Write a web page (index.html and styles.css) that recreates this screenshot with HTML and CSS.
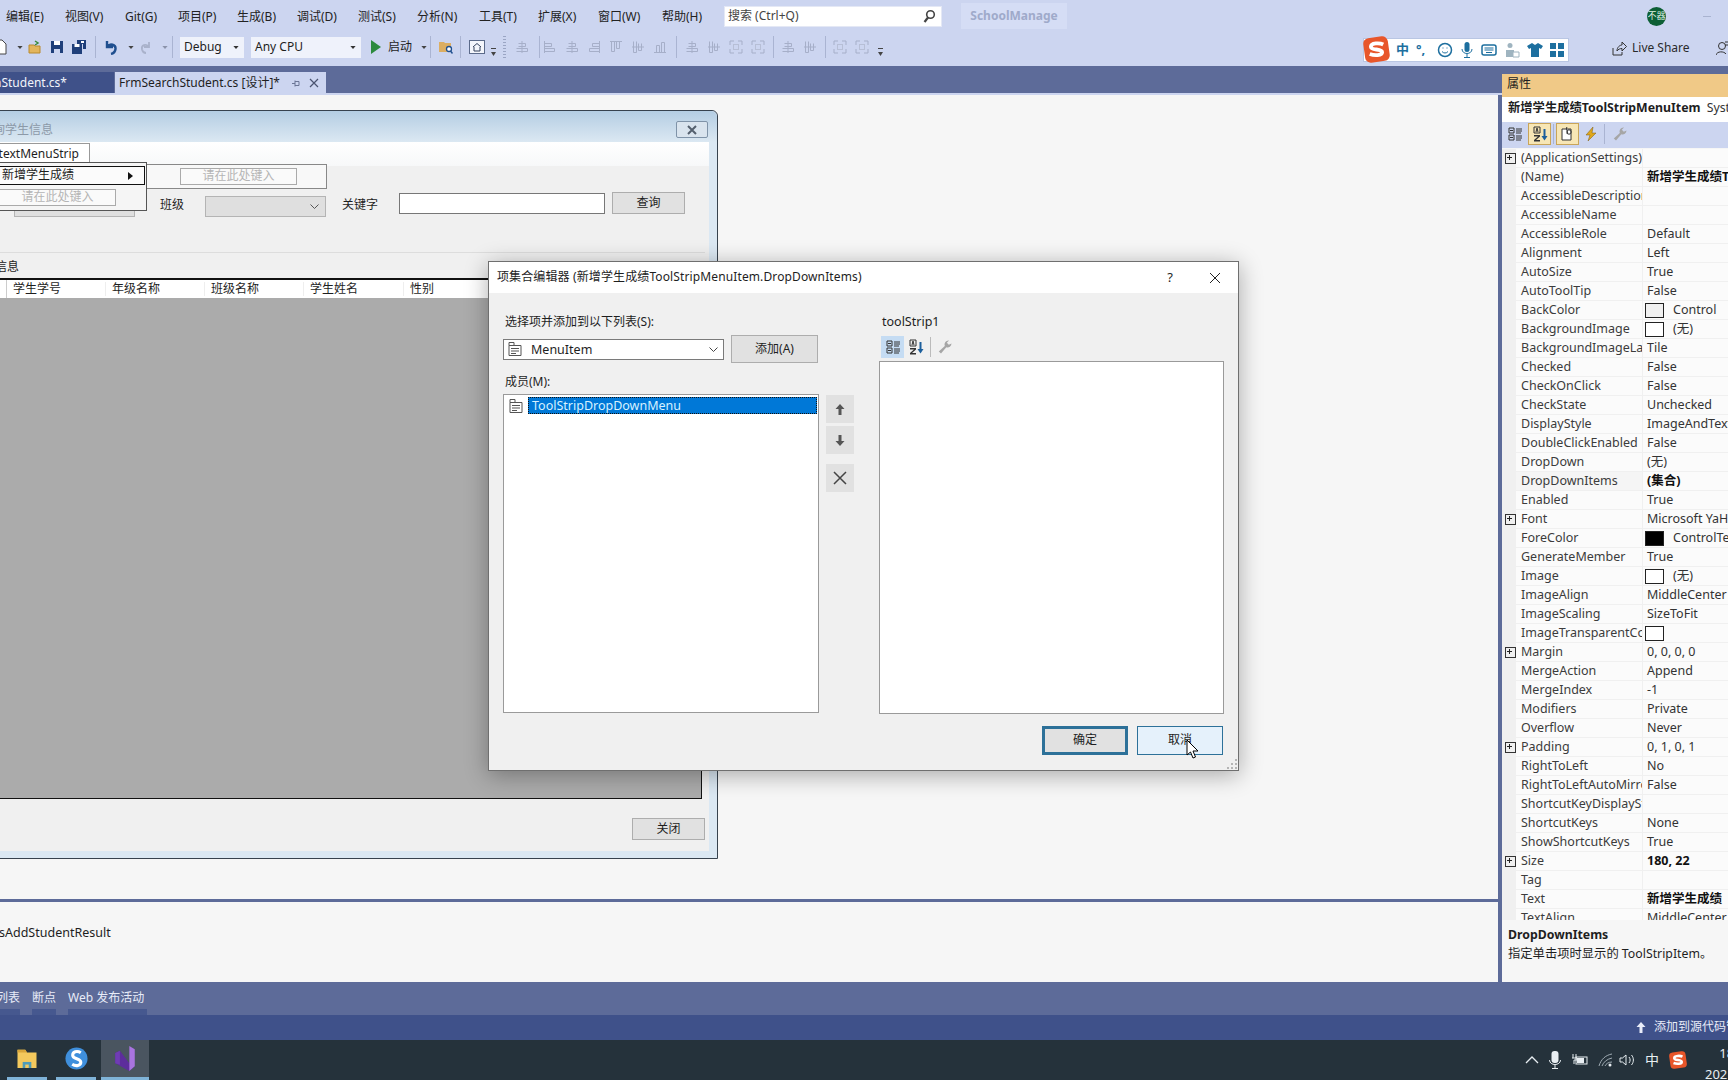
FILE: index.html
```html
<!DOCTYPE html>
<html lang="zh">
<head>
<meta charset="utf-8">
<title>SchoolManage - Visual Studio</title>
<link rel="stylesheet" href="styles.css">
</head>
<body>
<svg class="defs" width="0" height="0" aria-hidden="true">
  <symbol id="i-caret" viewBox="0 0 7 4"><path d="M0 0h7L3.500 4z"/></symbol>
  <symbol id="i-align" viewBox="0 0 14 14"><path d="M1.500 1v12M1.500 3.500h7v3h-7M1.500 8.500h10v3h-10" fill="none" stroke="#a6afc9"/></symbol>
  <symbol id="i-center" viewBox="0 0 14 14"><path d="M7 1v12M3.500 3.500h7v3h-7M1.500 8.500h11v3h-11" fill="none" stroke="#a6afc9"/></symbol>
  <symbol id="i-bracket" viewBox="0 0 14 14"><path d="M1 1h4M1 1v4M13 1H9M13 1v4M1 13h4M1 13V9M13 13H9M13 13V9" fill="none" stroke="#a6afc9"/><rect x="4.500" y="4.500" width="5" height="5" fill="none" stroke="#b7bfd6"/></symbol>
  <symbol id="i-cat" viewBox="0 0 16 16"><path d="M2 2h5v5H2zM2 9h5v5H2z" fill="none" stroke="#333"/><path d="M3 4.500h3M3 11.500h3M9 3h6M9 5h6M9 7h5M9 10h6M9 12h6M9 14h5" stroke="#333" fill="none"/></symbol>
  <symbol id="i-az" viewBox="0 0 16 16"><path d="M2 1h6v6H2z" fill="none" stroke="#333"/><path d="M4 6l1-4 1 4" stroke="#333" fill="none"/><path d="M2 9h6v1.500L4 14h4v1.500H2V14l4-3.500H2z" fill="#333"/><path d="M12.500 3v9" stroke="#1c5f9c" stroke-width="2"/><path d="M9.500 10h6l-3 4.500z" fill="#1c5f9c"/></symbol>
  <symbol id="i-wrench" viewBox="0 0 16 16"><path d="M14.500 4.500a4 4 0 0 1-5.200 3.800L4 14.500 1.800 12.500l6-5.500A4 4 0 0 1 12 1.500L9.800 3.800l2 2z" fill="#a6a6a6"/></symbol>
  <symbol id="i-list" viewBox="0 0 16 16"><path d="M2 1.500h5v3H2zM2 4.500v10h12v-10H7M4 7.500h8M4 10h8M4 12.500h5" fill="none" stroke="#555"/></symbol>
  <symbol id="i-sogou" viewBox="0 0 24 24"><rect x="1" y="1" width="22" height="22" rx="5" fill="#e8562a" transform="rotate(-8 12 12)"/><path d="M18 7.500c-3-1.500-11-1.500-11 2 0 3.500 10 1.500 10 5 0 3-7 3-11 1.500" fill="none" stroke="#fff" stroke-width="3.400"/></symbol>
</svg>

<div class="app">
  <header class="menubar">
    <nav class="menus">
      <span class="m1">编辑(E)</span><span class="m2">视图(V)</span><span class="m3">Git(G)</span><span class="m4">项目(P)</span><span class="m5">生成(B)</span><span class="m6">调试(D)</span><span class="m7">测试(S)</span><span class="m8">分析(N)</span><span class="m9">工具(T)</span><span class="m10">扩展(X)</span><span class="m11">窗口(W)</span><span class="m12">帮助(H)</span>
    </nav>
    <div class="search"><span>搜索 (Ctrl+Q)</span>
      <svg width="14" height="14" viewBox="0 0 14 14"><circle cx="8.500" cy="5.500" r="3.800" fill="none" stroke="#444" stroke-width="1.600"/><path d="M6 8.500L2.500 13" stroke="#444" stroke-width="2.200"/></svg>
    </div>
    <div class="solution">SchoolManage</div>
    <div class="avatar">不器</div>
    <div class="minimize"></div>
  </header>

  <div class="toolbar">
    <svg class="ti t-new" width="7" height="16" viewBox="0 0 7 16"><path d="M-8 1H2l4 4v10H-8z" fill="#fff" stroke="#444"/></svg>
    <svg class="car t-c1" width="6" height="3"><use href="#i-caret" fill="#444"/></svg>
    <svg class="ti t-open" width="14" height="14" viewBox="0 0 14 14"><path d="M1 5h5l1 1h5v7H1z" fill="#e3b55c" stroke="#b98a2d"/><path d="M7 1l3 2-3 2" fill="none" stroke="#3a8a3a" stroke-width="1.500"/></svg>
    <svg class="ti t-save" width="14" height="14" viewBox="0 0 14 14"><path d="M1 1h12v12H1z" fill="#1f3f7a"/><path d="M4 1h6v4H4z" fill="#fff"/><path d="M4 9h6v4H4z" fill="#ccd5f0"/></svg>
    <svg class="ti t-saveall" width="14" height="14" viewBox="0 0 14 14"><path d="M0 4h10v10H0z" fill="#1f3f7a"/><path d="M5 0h9v9h-3V4H5z" fill="#1f3f7a"/><path d="M2.500 4h5v3h-5z" fill="#fff"/><path d="M9 1h3v2H9z" fill="#fff"/></svg>
    <i class="sep s1"></i>
    <svg class="ti t-undo" width="14" height="15" viewBox="0 0 14 15"><path d="M3 1v6h6M3.500 6.500C6 3 12 4.500 11.500 9c-.3 2.500-2.500 4.500-4.500 5" fill="none" stroke="#1f4f8f" stroke-width="2.400"/></svg>
    <svg class="car t-c2" width="6" height="3"><use href="#i-caret" fill="#444"/></svg>
    <svg class="ti t-redo" width="14" height="14" viewBox="0 0 14 14"><path d="M10 2v5H5M9.500 6.500C7 3.500 2 5 3 9.500 3.500 11.500 5.500 13 7 13" fill="none" stroke="#a9b2cb" stroke-width="1.800"/></svg>
    <svg class="car t-c3" width="6" height="3"><use href="#i-caret" fill="#8b93aa"/></svg>
    <i class="sep s2"></i>
    <div class="combo c-debug"><span>Debug</span><svg width="6" height="3"><use href="#i-caret" fill="#333"/></svg></div>
    <div class="combo c-cpu"><span>Any CPU</span><svg width="6" height="3"><use href="#i-caret" fill="#333"/></svg></div>
    <svg class="ti t-play" width="10" height="14" viewBox="0 0 10 14"><path d="M0 0l10 7-10 7z" fill="#2c8a3e"/></svg>
    <span class="start">启动</span>
    <svg class="car t-c4" width="6" height="3"><use href="#i-caret" fill="#444"/></svg>
    <i class="sep s3"></i>
    <svg class="ti t-find" width="14" height="14" viewBox="0 0 14 14"><path d="M0 2h5l1 1h6v9H0z" fill="#dcae63"/><circle cx="10" cy="9" r="2.500" fill="#fff" stroke="#1f4f8f" stroke-width="1.300"/><path d="M11.500 11l2 2.500" stroke="#1f4f8f" stroke-width="1.500"/></svg>
    <i class="sep s4"></i>
    <svg class="ti t-home" width="16" height="14" viewBox="0 0 16 14"><rect x=".5" y=".5" width="15" height="13" fill="#f4f6fc" stroke="#5b6a8a"/><path d="M4 7l4-3.500L12 7M5 7v4h6V7" fill="none" stroke="#33415c"/></svg>
    <svg class="car t-c5" width="5" height="8" viewBox="0 0 5 8"><path d="M0 0h5v1H0zM0 4h5L2.500 8z" fill="#444"/></svg>
    <i class="grip"></i>
    <svg class="ti t-g0" width="14" height="14"><use href="#i-center"/></svg>
    <i class="sep s5"></i>
    <div class="greys g1">
      <svg width="14" height="14"><use href="#i-align"/></svg><svg width="14" height="14"><use href="#i-center"/></svg><svg width="14" height="14"><use href="#i-align" transform="matrix(-1 0 0 1 14 0)"/></svg><svg width="14" height="14"><use href="#i-align" transform="rotate(90 7 7)"/></svg><svg width="14" height="14"><use href="#i-center" transform="rotate(90 7 7)"/></svg><svg width="14" height="14"><use href="#i-align" transform="rotate(-90 7 7)"/></svg>
    </div>
    <i class="sep s6"></i>
    <div class="greys g2">
      <svg width="14" height="14"><use href="#i-center"/></svg><svg width="14" height="14"><use href="#i-center" transform="rotate(90 7 7)"/></svg><svg width="14" height="14"><use href="#i-bracket"/></svg><svg width="14" height="14"><use href="#i-bracket"/></svg>
    </div>
    <i class="sep s7"></i>
    <div class="greys g3"><svg width="14" height="14"><use href="#i-center"/></svg><svg width="14" height="14"><use href="#i-center" transform="rotate(90 7 7)"/></svg></div>
    <i class="sep s8"></i>
    <div class="greys g4"><svg width="14" height="14"><use href="#i-bracket"/></svg><svg width="14" height="14"><use href="#i-bracket"/></svg></div>
    <svg class="car t-c6" width="5" height="8" viewBox="0 0 5 8"><path d="M0 0h5v1H0zM0 4h5L2.500 8z" fill="#444"/></svg>

    <div class="ime">
      <svg class="ime-s" width="27" height="27"><use href="#i-sogou"/></svg>
      <span class="ime-t">中</span><span class="ime-t dot">°,</span>
      <svg width="16" height="16" viewBox="0 0 16 16"><circle cx="8" cy="8" r="6.500" fill="none" stroke="#1d6f9f" stroke-width="1.500"/><path d="M5 9.500c1.500 2 4.500 2 6 0M5.500 6h1M9.500 6h1" stroke="#1d6f9f" fill="none"/></svg>
      <svg width="14" height="16" viewBox="0 0 14 16"><rect x="4.500" y="0" width="5" height="10" rx="2.500" fill="#1d6f9f"/><path d="M2 7c0 6 10 6 10 0M7 12v3M4 15.500h6" stroke="#1d6f9f" fill="none"/></svg>
      <svg width="16" height="14" viewBox="0 0 16 14"><rect x="1" y="2" width="14" height="10" rx="2" fill="none" stroke="#1d6f9f" stroke-width="1.500"/><path d="M3.500 5h9M3.500 7h9M5 9.500h6" stroke="#1d6f9f"/></svg>
      <svg width="16" height="16" viewBox="0 0 16 16"><circle cx="6" cy="3.500" r="2.500" fill="#9fb4c0"/><path d="M2 8h8v7H2z" fill="#9fb4c0"/><path d="M9 10h6v5H9z" fill="#fff" stroke="#9fb4c0"/></svg>
      <svg width="16" height="14" viewBox="0 0 16 14"><path d="M5 0L0 3l2 3 2-1v9h8V5l2 1 2-3-5-3-3 2z" fill="#1d6f9f"/></svg>
      <svg width="14" height="14" viewBox="0 0 14 14"><path d="M0 0h6v6H0zM8 0h6v6H8zM0 8h6v6H0zM8 8h6v6H8z" fill="#1d6f9f"/></svg>
    </div>
    <div class="liveshare">
      <svg width="15" height="15" viewBox="0 0 15 15"><path d="M1 7v7h9v-3M5 10c0-4 3-6 5-6V1l4.500 4.500L10 10V7.500c-2 0-4 .8-5 2.500z" fill="none" stroke="#333"/></svg>
      <span>Live Share</span>
    </div>
    <svg class="person" width="14" height="16" viewBox="0 0 14 16"><circle cx="6" cy="5" r="3.500" fill="none" stroke="#333"/><path d="M0 14c1-4 8-4 10-1M9 1h5M9 4h5" fill="none" stroke="#333"/></svg>
  </div>

  <div class="tabstrip">
    <div class="tab tab-off"><span>nStudent.cs*</span></div>
    <div class="tab tab-on">
      <span>FrmSearchStudent.cs [设计]*</span>
      <svg width="9" height="9" viewBox="0 0 9 9"><path d="M1 4.500h3M4 1.500v6M4 2.500h4M4 6.500h4M8 2.500v4" stroke="#6b7696" fill="none"/></svg>
      <svg width="10" height="10" viewBox="0 0 10 10"><path d="M1 1l8 8M9 1l-8 8" stroke="#4a5470" stroke-width="1.200"/></svg>
    </div>
  </div>

  <div class="workspace">
    <main class="center">
      <section class="designer">
        <div class="form">
          <div class="form-title"><span>查询学生信息</span><b class="form-close"><svg width="14" height="10" viewBox="0 0 14 10"><path d="M3 1l8 8M11 1L3 9" stroke="#54606e" stroke-width="2"/></svg></b></div>
          <div class="form-menu"></div>
          <div class="form-body">
            <div class="filter">
              <div class="f-combo off f1"></div>
              <span class="f-lab l1">班级</span>
              <div class="f-combo off f2"><svg width="9" height="5" viewBox="0 0 9 5"><path d="M.5.500l4 4 4-4" fill="none" stroke="#555"/></svg></div>
              <span class="f-lab l2">关键字</span>
              <div class="f-input"></div>
              <div class="f-btn">查询</div>
            </div>
            <div class="f-caption">信息</div>
            <div class="grid">
              <div class="grid-head"><span class="h0"></span><span>学生学号</span><span>年级名称</span><span>班级名称</span><span>学生姓名</span><span>性别</span></div>
            </div>
            <div class="form-foot"><div class="f-btn">关闭</div></div>
          </div>
          <div class="cms-tab">textMenuStrip</div>
          <div class="cms-drop">
            <div class="cms-item"><span>新增学生成绩</span><svg width="5" height="8" viewBox="0 0 5 8"><path d="M0 0l5 4-5 4z" fill="#111"/></svg></div>
            <div class="cms-ph">请在此处键入</div>
          </div>
          <div class="cms-sub"><div class="cms-ph">请在此处键入</div></div>
        </div>
      </section>
      <div class="splitter"></div>
      <section class="output">sAddStudentResult</section>
    </main>

    <aside class="props">
      <div class="p-title">属性</div>
      <div class="p-subject"><b>新增学生成绩ToolStripMenuItem</b> <span>System.Windows.Forms.ToolStripMenuItem</span></div>
      <div class="p-tools">
        <svg width="16" height="16"><use href="#i-cat"/></svg>
        <b class="p-on"><svg width="16" height="16"><use href="#i-az"/></svg></b>
        <i class="p-sep first"></i>
        <b class="p-on"><svg width="16" height="16" viewBox="0 0 16 16"><path d="M2 3h9v11H2z" fill="#fff" stroke="#333"/><path d="M7 1c-2 3 2 4 0 7" stroke="#333" fill="none"/><circle cx="9" cy="6" r="2.200" fill="none" stroke="#333"/></svg></b>
        <svg width="14" height="16" viewBox="0 0 14 16"><path d="M9 1L2 9h4l-2 6 8-8H8z" fill="#e0a81c" stroke="#7a5b10" stroke-width=".5"/></svg>
        <i class="p-sep second"></i>
        <svg width="16" height="16"><use href="#i-wrench"/></svg>
      </div>
      <div class="p-grid">
        <div class="row"><i class="plus"></i><span>(ApplicationSettings)</span><em></em></div>
        <div class="row"><i></i><span>(Name)</span><em class="bold">新增学生成绩ToolStripMenuItem</em></div>
        <div class="row"><i></i><span>AccessibleDescription</span><em></em></div>
        <div class="row"><i></i><span>AccessibleName</span><em></em></div>
        <div class="row"><i></i><span>AccessibleRole</span><em>Default</em></div>
        <div class="row"><i></i><span>Alignment</span><em>Left</em></div>
        <div class="row"><i></i><span>AutoSize</span><em>True</em></div>
        <div class="row"><i></i><span>AutoToolTip</span><em>False</em></div>
        <div class="row"><i></i><span>BackColor</span><em><u class="sw grey"></u>Control</em></div>
        <div class="row"><i></i><span>BackgroundImage</span><em><u class="sw"></u>(无)</em></div>
        <div class="row"><i></i><span>BackgroundImageLayout</span><em>Tile</em></div>
        <div class="row"><i></i><span>Checked</span><em>False</em></div>
        <div class="row"><i></i><span>CheckOnClick</span><em>False</em></div>
        <div class="row"><i></i><span>CheckState</span><em>Unchecked</em></div>
        <div class="row"><i></i><span>DisplayStyle</span><em>ImageAndText</em></div>
        <div class="row"><i></i><span>DoubleClickEnabled</span><em>False</em></div>
        <div class="row"><i></i><span>DropDown</span><em>(无)</em></div>
        <div class="row sel"><i></i><span>DropDownItems</span><em class="bold">(集合)</em></div>
        <div class="row"><i></i><span>Enabled</span><em>True</em></div>
        <div class="row"><i class="plus"></i><span>Font</span><em>Microsoft YaHei UI, 9pt</em></div>
        <div class="row"><i></i><span>ForeColor</span><em><u class="sw black"></u>ControlText</em></div>
        <div class="row"><i></i><span>GenerateMember</span><em>True</em></div>
        <div class="row"><i></i><span>Image</span><em><u class="sw"></u>(无)</em></div>
        <div class="row"><i></i><span>ImageAlign</span><em>MiddleCenter</em></div>
        <div class="row"><i></i><span>ImageScaling</span><em>SizeToFit</em></div>
        <div class="row"><i></i><span>ImageTransparentColor</span><em><u class="sw"></u></em></div>
        <div class="row"><i class="plus"></i><span>Margin</span><em>0, 0, 0, 0</em></div>
        <div class="row"><i></i><span>MergeAction</span><em>Append</em></div>
        <div class="row"><i></i><span>MergeIndex</span><em>-1</em></div>
        <div class="row"><i></i><span>Modifiers</span><em>Private</em></div>
        <div class="row"><i></i><span>Overflow</span><em>Never</em></div>
        <div class="row"><i class="plus"></i><span>Padding</span><em>0, 1, 0, 1</em></div>
        <div class="row"><i></i><span>RightToLeft</span><em>No</em></div>
        <div class="row"><i></i><span>RightToLeftAutoMirrorImage</span><em>False</em></div>
        <div class="row"><i></i><span>ShortcutKeyDisplayString</span><em></em></div>
        <div class="row"><i></i><span>ShortcutKeys</span><em>None</em></div>
        <div class="row"><i></i><span>ShowShortcutKeys</span><em>True</em></div>
        <div class="row"><i class="plus"></i><span>Size</span><em class="bold">180, 22</em></div>
        <div class="row"><i></i><span>Tag</span><em></em></div>
        <div class="row"><i></i><span>Text</span><em class="bold">新增学生成绩</em></div>
        <div class="row"><i></i><span>TextAlign</span><em>MiddleCenter</em></div>
      </div>
      <div class="p-desc"><b>DropDownItems</b><span>指定单击项时显示的 ToolStripItem。</span></div>
    </aside>
  </div>

  <div class="navstrip"><span class="n1">错误列表</span><span class="n2">断点</span><span class="n3">Web 发布活动</span></div>
  <div class="status">
    <svg width="10" height="11" viewBox="0 0 10 11"><path d="M5 0l4.500 5H6.500v6h-3V5H.5z" fill="#e8ecf8"/></svg>
    <span>添加到源代码管理</span>
  </div>
  <footer class="taskbar">
    <div class="tb-btn b1"><svg width="22" height="19" viewBox="0 0 24 22"><path d="M1 1h9l2 3h11v18H1z" fill="#f4c95d"/><path d="M1 1h9l2 3H1z" fill="#d9a63a"/><path d="M7 15h10v7H7z" fill="#4f9cb8"/><path d="M10 18h4v4h-4z" fill="#f4c95d"/></svg></div>
    <div class="tb-btn b2"><svg width="23" height="23" viewBox="0 0 24 24"><circle cx="12" cy="12" r="11.500" fill="#3f8fdc"/><path d="M16.500 6C12.500 3.500 8 5 8 8.500c0 4.500 8.500 3 8.500 7.500 0 3.500-5 4.500-9 2" fill="none" stroke="#fff" stroke-width="3.200"/></svg></div>
    <div class="tb-btn b3"><svg width="24" height="25" viewBox="0 0 25 32"><path d="M0 9l6-3 12 16 7 4-7 6L0 22z" fill="#5d2d9c"/><path d="M18 0l7 4v22l-7 6z" fill="#a974e0"/><path d="M0 9l6-3v18l-6-2z" fill="#6f3cb4"/></svg></div>
    <div class="tray">
      <svg width="14" height="8" viewBox="0 0 14 8"><path d="M1 7l6-6 6 6" fill="none" stroke="#e8eef2" stroke-width="1.300"/></svg>
      <svg width="12" height="18" viewBox="0 0 12 18"><rect x="2.500" y="0" width="7" height="12" rx="3" fill="#e8eef2"/><path d="M.5 9c0 6 11 6 11 0M6 14v3M3 17.500h6" stroke="#e8eef2" fill="none"/></svg>
      <svg width="17" height="12" viewBox="0 0 17 12"><rect x="5" y="3" width="11" height="7" fill="none" stroke="#e8eef2"/><rect x="6" y="4" width="7" height="5" fill="#e8eef2"/><path d="M2 0v4M5 0v4M1 4h5v2H3v4" stroke="#e8eef2" fill="none"/></svg>
      <svg width="15" height="14" viewBox="0 0 15 14"><path d="M1 13C3 6 8 2 14 1M4 13c1.500-4 5-7 10-8M7 13c1-2 3-4 7-4" fill="none" stroke="#9fabb3"/><circle cx="12" cy="12" r="1.500" fill="#e8eef2"/></svg>
      <svg class="spk" width="16" height="14" viewBox="0 0 16 14"><path d="M1 5h2.500L7 2v10L3.500 9H1zM10 4c1.500 2 1.500 4 0 6M12.500 2c2.500 3 2.500 7 0 10" fill="none" stroke="#e8eef2"/></svg>
      <span class="tray-zh">中</span>
      <svg width="18" height="18"><use href="#i-sogou"/></svg>
    </div>
    <div class="clock"><span>18:12</span><span>2021/12/9</span></div>
  </footer>

  <div class="dialog">
    <div class="d-title"><span>项集合编辑器 (新增学生成绩ToolStripMenuItem.DropDownItems)</span><b>?</b>
      <svg width="12" height="12" viewBox="0 0 12 12"><path d="M1 1l10 10M11 1L1 11" stroke="#222"/></svg>
    </div>
    <div class="d-body">
      <div class="d-left">
        <label class="d-lab">选择项并添加到以下列表(S):</label>
        <div class="d-add">
          <div class="d-combo"><svg width="16" height="16"><use href="#i-list"/></svg><span>MenuItem</span><svg class="d-chev" width="9" height="5" viewBox="0 0 9 5"><path d="M.5.500l4 4 4-4" fill="none" stroke="#444"/></svg></div>
          <div class="d-btn addb">添加(A)</div>
        </div>
        <label class="d-lab mem">成员(M):</label>
        <div class="d-mem">
          <div class="d-list"><div class="d-item"><svg width="16" height="16"><use href="#i-list"/></svg><span>ToolStripDropDownMenu</span></div></div>
          <div class="d-arrows">
            <div class="sq"><svg width="10" height="11" viewBox="0 0 10 11"><path d="M5 0l4.500 5H6.500v6h-3V5H.5z" fill="#555"/></svg></div>
            <div class="sq"><svg width="10" height="11" viewBox="0 0 10 11"><path d="M5 11L.5 6h3V0h3v6h3z" fill="#555"/></svg></div>
            <div class="sq del"><svg width="14" height="14" viewBox="0 0 14 14"><path d="M1 1l12 12M13 1L1 13" stroke="#444" stroke-width="1.500"/></svg></div>
          </div>
        </div>
      </div>
      <div class="d-right">
        <label class="d-lab strip">toolStrip1</label>
        <div class="d-tools">
          <b class="d-on"><svg width="16" height="16"><use href="#i-cat"/></svg></b>
          <svg width="16" height="16"><use href="#i-az"/></svg>
          <i></i>
          <svg width="16" height="16"><use href="#i-wrench"/></svg>
        </div>
        <div class="d-props"></div>
      </div>
    </div>
    <div class="d-foot">
      <div class="d-ok default">确定</div>
      <div class="d-ok hover">取消</div>
    </div>
    <svg class="d-grip" width="10" height="10" viewBox="0 0 10 10"><path d="M8 0h2v2H8zM4 4h2v2H4zM8 4h2v2H8zM0 8h2v2H0zM4 8h2v2H4zM8 8h2v2H8z" fill="#b5b5b5"/></svg>
  </div>
  <svg class="cursor" width="13" height="20" viewBox="0 0 13 20"><path d="M1 1v15l3.500-3 2.500 6 2.500-1-2.500-6h5z" fill="#fff" stroke="#000"/></svg>
</div>
</body>
</html>
```

FILE: styles.css
```css
* { box-sizing: border-box; }
html, body { margin: 0; padding: 0; width: 1728px; height: 1080px; overflow: hidden; }
body { font: 13px/1.2 "Noto Sans", "Noto Sans CJK SC", sans-serif; color: #1e1e1e; background: #ccd5f0; }
.defs { position: absolute; }
.app { position: relative; width: 1728px; height: 1080px; display: flex; flex-direction: column; overflow: hidden; }
em, u, i { font-style: normal; text-decoration: none; }

/* menu */
.menubar { height: 32px; display: flex; align-items: center; background: #ccd5f0; flex: none; }
.menus { display: flex; width: 724px; padding: 2px 0 0 6px; font-size: 12px; color: #222; }
.menus span { flex: none; }
.m1 { width: 59px; } .m2 { width: 60px; } .m3 { width: 53px; } .m4 { width: 59px; } .m5 { width: 60px; } .m6 { width: 61px; }
.m7 { width: 59px; } .m8 { width: 62px; } .m9 { width: 59px; } .m10 { width: 60px; } .m11 { width: 64px; } .m12 { width: 44px; }
.search { width: 218px; height: 21px; background: #fff; border: 1px solid #e4e8f5; display: flex; align-items: center; justify-content: space-between; padding: 0 5px 0 3px; font-size: 12px; color: #444; }
.solution { width: 106px; height: 26px; margin-left: 19px; background: #d5ddf5; color: #9faaca; font-weight: 700; font-size: 12px; display: flex; align-items: center; justify-content: center; }
.avatar { width: 19px; height: 19px; margin-left: 580px; border-radius: 50%; background: #0d5f35; color: #dff0e4; font-size: 9px; display: flex; align-items: center; justify-content: center; overflow: hidden; white-space: nowrap; }
.minimize { width: 8px; height: 1px; background: #a9b3d0; margin-left: 37px; }

/* toolbar */
.toolbar { height: 34px; flex: none; display: flex; align-items: center; background: #ccd5f0; position: relative; padding-bottom: 4px; }
.toolbar > * { flex: none; }
.sep { width: 1px; height: 22px; background: #aab4d2; }
.t-c1 { margin-left: 10px; }
.t-open { margin-left: 5px; } .t-save { margin-left: 8px; } .t-saveall { margin-left: 8px; }
.s1 { margin-left: 9px; } .t-undo { margin-left: 8px; } .t-c2 { margin-left: 10px; } .t-redo { margin-left: 5px; } .t-c3 { margin-left: 9px; }
.s2 { margin-left: 4px; }
.combo { height: 21px; background: #eff2fb; display: flex; align-items: center; justify-content: space-between; padding: 0 5px 0 4px; font-size: 12px; }
.c-debug { width: 64px; margin-left: 7px; } .c-cpu { width: 110px; margin-left: 7px; }
.t-play { margin-left: 10px; } .start { margin-left: 7px; width: 27px; font-size: 12px; } .t-c4 { margin-left: 6px; }
.s3 { margin-left: 3px; } .t-find { margin-left: 8px; } .s4 { margin-left: 7px; } .t-home { margin-left: 8px; }
.t-c5 { margin: 10px 0 0 6px; }
.grip { width: 3px; height: 22px; margin-left: 7px; background: repeating-linear-gradient(#9aa5c4 0 1px, transparent 1px 3px); }
.t-g0 { margin-left: 9px; } .s5 { margin-left: 10px; }
.greys { display: flex; gap: 8px; }
.g1 { margin-left: 3px; } .s6 { margin-left: 9px; } .g2 { margin-left: 8px; } .s7 { margin-left: 8px; }
.g3 { margin-left: 7px; } .s8 { margin-left: 8px; } .g4 { margin-left: 7px; }
.t-c6 { margin: 10px 0 0 9px; }
.ime { position: absolute; left: 1363px; top: 6px; width: 206px; height: 24px; background: #fff; border: 1px solid #b9c6e3; display: flex; align-items: center; justify-content: flex-start; gap: 7px; padding-left: 32px; }
.ime-s { position: absolute; left: -1px; top: -3px; }
.ime-t { color: #1d6f9f; font-weight: 700; font-size: 13px; }
.dot { width: 14px; }
.liveshare { position: absolute; left: 1612px; top: 9px; display: flex; align-items: center; gap: 5px; font-size: 12px; color: #2a2a2a; }
.person { position: absolute; left: 1716px; top: 9px; }

/* tabs */
.tabstrip { height: 29px; flex: none; background: #5d6b99; display: flex; align-items: flex-end; border-bottom: 2px solid #ccd5f0; }
.tab { height: 21px; display: flex; align-items: center; font-size: 12px; padding-top: 1px; }
.tab-off { width: 114px; background: #3f5189; color: #f2f4fb; white-space: nowrap; overflow: hidden; }
.tab-off span { margin-left: -6px; }
.tab-on { width: 211px; margin-left: 1px; background: #ccd5f0; color: #1e1e1e; padding-left: 4px; white-space: nowrap; }
.tab-on svg:first-of-type { margin-left: 11px; }
.tab-on svg:last-of-type { margin-left: 9px; }

/* workspace */
.workspace { flex: 1; min-height: 0; display: flex; background: #5d6b99; }
.center { width: 1498px; flex: none; display: flex; flex-direction: column; background: #f6f6f6; }
.designer { flex: 1; position: relative; overflow: hidden; min-height: 0; }
.splitter { height: 3px; background: #5d6b99; flex: none; }
.output { height: 80px; flex: none; padding-top: 23px; font-size: 12.500px; background: #f6f6f6; white-space: nowrap; margin-left: -1px; }

.form { position: absolute; left: -31px; top: 15px; width: 749px; height: 749px; border: 1px solid #37424e; border-radius: 6px 6px 0 0; background: #dbe8f3; display: flex; flex-direction: column; }
.form-title { height: 31px; flex: none; background: linear-gradient(#b4cde3, #dbe8f2); position: relative; border-radius: 6px 6px 0 0; }
.form-title span { position: absolute; left: 11px; top: 12px; color: #8c99a8; font-size: 12px; }
.form-close { position: absolute; left: 706px; top: 10px; width: 32px; height: 17px; border: 1px solid #7f93a8; border-radius: 2px; background: #d9e4ee; display: flex; align-items: center; justify-content: center; }
.form-menu { height: 24px; flex: none; margin: 0 8px 0 0; background: linear-gradient(#fff, #f7f8f9); }
.form-body { flex: 1; margin: 0 8px 7px 0; background: #f0f0f0; display: flex; flex-direction: column; }
.filter { height: 87px; flex: none; margin-right: 4px; border-bottom: 1px solid #ddd; display: flex; align-items: flex-start; padding-top: 29px; position: relative; }
.f-combo { height: 21px; background: #dfdfdf; border: 1px solid #b4b4b4; display: flex; align-items: center; justify-content: flex-end; padding-right: 6px; }
.f1 { width: 121px; margin-left: 44px; margin-top: 1px; } .f2 { width: 121px; margin-top: 1px; }
.f-lab { font-size: 12px; margin-top: 3px; }
.l1 { margin-left: 25px; width: 45px; } .l2 { margin-left: 16px; width: 57px; }
.f-input { width: 206px; height: 21px; background: #fff; border: 1px solid #777; margin-top: -2px; }
.f-btn { width: 73px; height: 22px; background: #e1e1e1; border: 1px solid #adadad; display: flex; align-items: center; justify-content: center; font-size: 12px; margin-left: 7px; margin-top: -3px; }
.f-caption { height: 25px; padding: 7px 0 0 25px; font-size: 12px; white-space: nowrap; }
.grid { flex: 1; margin: 0 7px 0 0; background: #ababab; border: 1px solid #111; border-top-width: 2px; }
.grid-head { height: 18px; background: #fff; display: flex; font-size: 12px; align-items: center; }
.grid-head span { width: 99px; padding-left: 6px; border-right: 1px solid #eee; flex: none; }
.grid-head span:nth-child(5) { width: 100px; }
.h0.h0 { width: 36px; padding: 0; height: 18px; border-right: 1px solid #ccc; }
.form-foot { height: 52px; flex: none; display: flex; justify-content: flex-end; padding: 19px 4px 0 0; }
.form-foot .f-btn { margin-top: 0; height: 22px; }
.cms-tab { position: absolute; left: 0; top: 32px; width: 120px; height: 21px; background: #fff; border: 1px solid #999; border-bottom: 0; font-size: 12px; text-align: right; padding: 3px 10px 0 0; white-space: nowrap; overflow: hidden; }
.cms-drop { position: absolute; left: 0; top: 51px; width: 177px; height: 49px; background: #f5f5f5; border: 1px solid #555; padding: 3px 1px 0 0; }
.cms-item { height: 19px; border: 1px solid #111; display: flex; align-items: center; justify-content: space-between; padding: 0 8px 0 30px; font-size: 12px; background: #fbfbfb; }
.cms-item svg { margin-right: 3px; }
.cms-ph { height: 17px; width: 117px; border: 1px solid #aaa; background: #fafafa; color: #b5b5b5; font-size: 12px; display: flex; align-items: center; justify-content: center; }
.cms-drop .cms-ph { margin: 4px 0 0 28px; }
.cms-sub { position: absolute; left: 177px; top: 53px; width: 180px; height: 25px; border: 1px solid #888; border-left: 0; background: #f8f8f8; padding: 3px 0 0 33px; }

/* properties */
.props { flex: 1; margin-left: 4px; margin-top: -21px; min-width: 0; position: relative; display: flex; flex-direction: column; background: #f6f6f6; z-index: 1; }
.p-title { height: 23px; flex: none; background: #f0c987; padding: 3px 0 0 5px; font-size: 12px; }
.p-subject { height: 25px; flex: none; background: #fff; padding: 4px 0 0 6px; white-space: nowrap; overflow: hidden; font-size: 12.300px; }
.p-subject span { color: #333; margin-left: 3px; }
.p-tools { height: 26px; flex: none; background: #ccd5f0; display: flex; align-items: center; padding: 0 0 2px 5px; gap: 5px; margin-bottom: 1px; }
.p-on { width: 23px; height: 22px; background: #f7e6b5; border: 1px solid #c9a559; display: flex; align-items: center; justify-content: center; }
.p-sep { width: 1px; height: 20px; background: #aab4d2; }
.p-sep.first { margin: 0 -3px 0 -3px; }
.p-sep.second { margin: 0 2px 0 1px; }
.p-grid { height: 771px; flex: none; overflow: hidden; background: #fbfbfb; }
.row { height: 19px; display: grid; grid-template-columns: 14px 127px 1fr; font-size: 12.500px; line-height: 18px; color: #3c3c3c; white-space: nowrap; }
.row i { background: #f0f0f0; position: relative; }
.row span { padding-left: 5px; overflow: hidden; border-bottom: 1px solid #f0f0f0; border-right: 1px solid #f0f0f0; }
.row em { padding-left: 4px; overflow: hidden; border-bottom: 1px solid #f0f0f0; display: flex; align-items: center; height: 19px; color: #333; }
.row .bold { font-weight: 700; color: #111; }
.sel span { background: #f5f5f5; }
.plus::before { content: ""; position: absolute; left: 3px; top: 4px; width: 9px; height: 9px; border: 1px solid #333; }
.plus::after { content: ""; position: absolute; left: 5px; top: 6px; width: 5px; height: 5px; background: linear-gradient(#222, #222) center/5px 1px no-repeat, linear-gradient(#222, #222) center/1px 5px no-repeat; }
.sw { width: 19px; height: 15px; border: 1px solid #222; background: #fff; flex: none; margin-right: 9px; margin-left: -2px; }
.sw.grey { background: #f0f0f0; }
.sw.black { background: #000; }
.p-desc { flex: 1; background: #f6f6f6; padding: 8px 0 0 6px; font-size: 12.300px; display: flex; flex-direction: column; gap: 4px; white-space: nowrap; }

/* bottom */
.navstrip { height: 33px; flex: none; background: #5d6b99; color: #e8ecf8; position: relative; font-size: 12px; display: flex; padding-left: 32px; }
.navstrip span { padding-top: 9px; height: 33px; border-bottom: 6px solid #46588f; flex: none; }
.n1 { position: absolute; right: 1708px; white-space: nowrap; }
.n2 { width: 24px; margin-right: 12px; white-space: nowrap; }
.n3 { width: 79px; white-space: nowrap; }
.status { height: 25px; flex: none; background: #3f518a; color: #e8ecf8; display: flex; align-items: center; padding-left: 1636px; gap: 8px; font-size: 12px; white-space: nowrap; }
.status svg { flex: none; }
.taskbar { height: 40px; flex: none; background: #25323b; display: flex; position: relative; }
.tb-btn { height: 40px; flex: none; display: flex; align-items: center; justify-content: center; border-bottom: 3px solid #7fb3d8; }
.b1 { width: 40px; margin-left: 7px; } .b2 { width: 40px; margin-left: 9px; } .b3 { width: 48px; margin-left: 5px; background: #4a5560; }
.tray { display: flex; align-items: center; margin-left: 1376px; width: 175px; gap: 10px; color: #e8eef2; flex: none; }
.tray svg { flex: none; }
.spk { margin-left: -4px; }
.tray-zh { font-size: 14px; }
.clock { color: #e8eef2; font-size: 13px; text-align: center; display: flex; flex-direction: column; align-items: center; gap: 5px; padding-top: 6px; flex: none; white-space: nowrap; margin-left: 5px; }

/* dialog */
.dialog { position: absolute; left: 488px; top: 261px; width: 751px; height: 510px; background: #f0f0f0; border: 1px solid #6f6f6f; box-shadow: 0 4px 22px rgba(0,0,0,.32); display: flex; flex-direction: column; z-index: 5; }
.d-title { height: 31px; flex: none; background: #fff; display: flex; align-items: center; padding: 0 17px 0 8px; font-size: 12px; }
.d-title span { flex: 1; white-space: nowrap; letter-spacing: .12px; }
.d-title b { font-weight: 400; margin-right: 36px; font-size: 13px; }
.d-body { flex: 1; display: flex; padding: 22px 14px 0 14px; min-height: 0; }
.d-left { width: 351px; flex: none; display: flex; flex-direction: column; }
.d-lab { font-size: 12px; display: block; height: 17px; padding-left: 2px; }
.d-add { display: flex; align-items: center; gap: 7px; margin-top: 4px; height: 28px; flex: none; }
.d-combo { width: 221px; height: 21px; background: #fff; border: 1px solid #7a7a7a; display: flex; align-items: center; padding-left: 3px; gap: 8px; font-size: 12.500px; position: relative; }
.d-chev { position: absolute; right: 5px; top: 7px; }
.d-btn { width: 87px; height: 28px; background: #e1e1e1; border: 1px solid #adadad; display: flex; align-items: center; justify-content: center; font-size: 12px; }
.mem { margin-top: 12px; height: 19px; flex: none; }
.d-mem { display: flex; gap: 7px; flex: none; }
.d-list { width: 316px; height: 319px; background: #fff; border: 1px solid #9a9a9a; padding: 2px 1px; }
.d-item { display: flex; gap: 4px; height: 17px; align-items: center; padding-left: 3px; }
.d-item span { flex: 1; background: #0078d7; color: #d6f1ff; outline: 1px dotted #111; outline-offset: -1px; padding-left: 4px; font-size: 12.500px; line-height: 17px; }
.d-arrows { width: 28px; display: flex; flex-direction: column; gap: 3px; padding-top: 1px; }
.sq { width: 28px; height: 28px; background: #e1e1e1; display: flex; align-items: center; justify-content: center; }
.del { margin-top: 7px; }
.d-right { width: 345px; margin-left: 25px; flex: none; display: flex; flex-direction: column; }
.strip { padding-left: 3px; font-size: 12.500px; height: 21px; margin-top: -1px; flex: none; }
.d-tools { height: 23px; display: flex; align-items: center; gap: 6px; padding-left: 2px; flex: none; }
.d-tools i { width: 1px; height: 20px; background: #bbb; }
.d-on { width: 23px; height: 22px; background: #c5dcf3; display: flex; align-items: center; justify-content: center; margin-right: -2px; }
.d-props { width: 345px; height: 353px; margin-top: 3px; background: #fff; border: 1px solid #9a9a9a; flex: none; }
.d-foot { height: 57px; flex: none; display: flex; justify-content: flex-end; gap: 9px; padding: 13px 15px 0 0; }
.d-ok { width: 86px; height: 29px; display: flex; align-items: center; justify-content: center; font-size: 12px; }
.default { background: #e1e1e1; border: 3px solid #2d7199; }
.hover { background: #e5f1fb; border: 1px solid #2d7199; }
.d-grip { position: absolute; right: 1px; bottom: 1px; }
.cursor { position: absolute; left: 1186px; top: 739px; z-index: 6; }
```
